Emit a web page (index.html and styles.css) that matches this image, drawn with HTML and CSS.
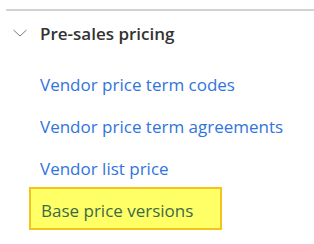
FILE: index.html
```html
<!DOCTYPE html>
<html lang="en">
<head>
    <meta charset="UTF-8">
    <title>Pre-sales pricing</title>
    <link rel="stylesheet" href="styles.css">
</head>
<body>
<div class="divider"></div>
<div class="group">
    <div class="groupHead">
        <svg class="chev" width="14" height="8" viewBox="0 0 14 8"><path d="M0.5 1 L7 7 L13.5 1" fill="none" stroke="#7a7a7a" stroke-width="1"/></svg>
        <span class="groupTitle">Pre-sales pricing</span>
    </div>
    <ul class="links">
        <li><a href="#">Vendor price term codes</a></li>
        <li><a href="#">Vendor price term agreements</a></li>
        <li><a href="#">Vendor list price</a></li>
        <li class="hl"><a href="#">Base price versions</a></li>
    </ul>
</div>
</body>
</html>
```
FILE: styles.css
```css
* {margin:0;padding:0;box-sizing:border-box;}
html,body {width:100%;height:100%;background:#fff;}
body {font-family:"Open Sans","Noto Sans",sans-serif;font-size:17px;line-height:23px;}
.divider{
    margin: 9px 0 0 6px;
    height: 2px;
    background: #d2d2d2;
}
.group{
    padding-top: 11px;
}
.groupHead{
    display: flex;
    align-items: center;
    height: 23px;
    padding-left: 13px;
}
.chev{
    margin-right: 13px;
    margin-top: -2px;
}
.groupTitle{
    font-weight: 600;
    color: #333;
}
.links{
    list-style: none;
    padding: 18px 0 0 29px;
}
.links li{
    height: 42px;
    display: flex;
    align-items: center;
    padding-left: 11px;
}
.links a{
    color: #3074de;
    text-decoration: none;
}
.links li.hl{
    width: 193px;
    height: 43px;
    margin-top: -2px;
    padding: 4px 0 0 10px;
    background: #ffff66;
    border: 2px solid #f6c21c;
}
.links li.hl a{
    color: #3b6a48;
}
```
